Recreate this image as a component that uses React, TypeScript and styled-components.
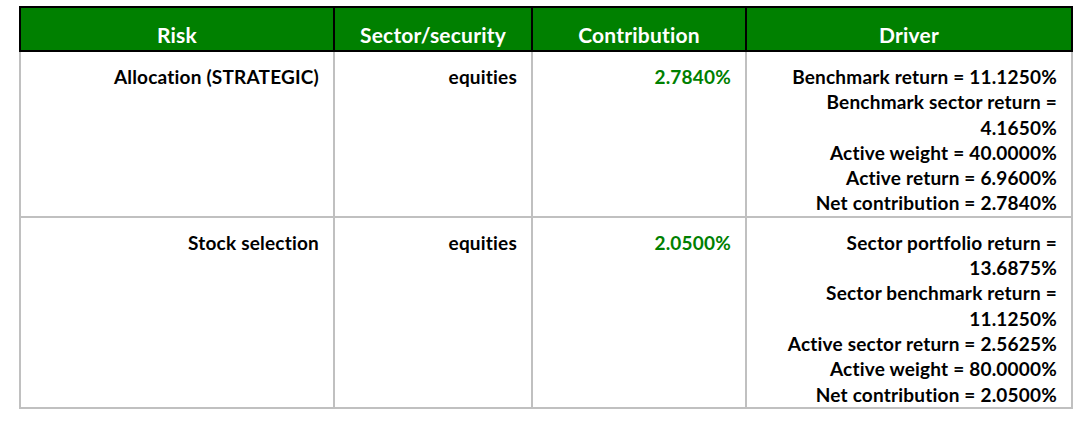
import styled, { createGlobalStyle } from "styled-components";

const GlobalStyle = createGlobalStyle`
  body {
    margin: 0;
    background: #ffffff;
    font-family: Lato, "Open Sans", sans-serif;
  }
`;

const Page = styled.div`
  padding: 6px 0 0 19px;
`;

const Table = styled.table`
  border-collapse: collapse;
  table-layout: fixed;
  width: 1052px;
`;

const HeadCell = styled.th`
  background: #008000;
  color: #ffffff;
  border: 2px solid #000000;
  height: 40px;
  padding: 0 12px 2px;
  font-size: 21px;
  letter-spacing: 0.2px;
  font-weight: 700;
  text-align: center;
  vertical-align: bottom;
  line-height: 26px;
`;

const Cell = styled.td<{ $green?: boolean }>`
  border: 2px solid #c0c0c0;
  padding: 12px 14px 0 14px;
  vertical-align: top;
  text-align: right;
  font-size: 19px;
  letter-spacing: 0.2px;
  font-weight: 700;
  line-height: 25.3px;
  color: ${(p) => (p.$green ? "#008000" : "#000000")};
`;

const Line = styled.div`
  white-space: nowrap;
`;

type Row = {
  risk: string;
  sector: string;
  contribution: string;
  driver: string[];
};

const rows: Row[] = [
  {
    risk: "Allocation (STRATEGIC)",
    sector: "equities",
    contribution: "2.7840%",
    driver: [
      "Benchmark return = 11.1250%",
      "Benchmark sector return =",
      "4.1650%",
      "Active weight = 40.0000%",
      "Active return = 6.9600%",
      "Net contribution = 2.7840%",
    ],
  },
  {
    risk: "Stock selection",
    sector: "equities",
    contribution: "2.0500%",
    driver: [
      "Sector portfolio return =",
      "13.6875%",
      "Sector benchmark return =",
      "11.1250%",
      "Active sector return = 2.5625%",
      "Active weight = 80.0000%",
      "Net contribution = 2.0500%",
    ],
  },
];

const App = () => {
  return (
    <Page>
      <GlobalStyle />
      <Table>
        <colgroup>
          <col style={{ width: 314 }} />
          <col style={{ width: 198 }} />
          <col style={{ width: 214 }} />
          <col style={{ width: 326 }} />
        </colgroup>
        <thead>
          <tr>
            <HeadCell>Risk</HeadCell>
            <HeadCell>Sector/security</HeadCell>
            <HeadCell>Contribution</HeadCell>
            <HeadCell>Driver</HeadCell>
          </tr>
        </thead>
        <tbody>
          {rows.map((row) => (
            <tr key={row.risk}>
              <Cell>{row.risk}</Cell>
              <Cell>{row.sector}</Cell>
              <Cell $green>{row.contribution}</Cell>
              <Cell>
                {row.driver.map((line) => (
                  <Line key={line}>{line}</Line>
                ))}
              </Cell>
            </tr>
          ))}
        </tbody>
      </Table>
    </Page>
  );
};

export default App;
